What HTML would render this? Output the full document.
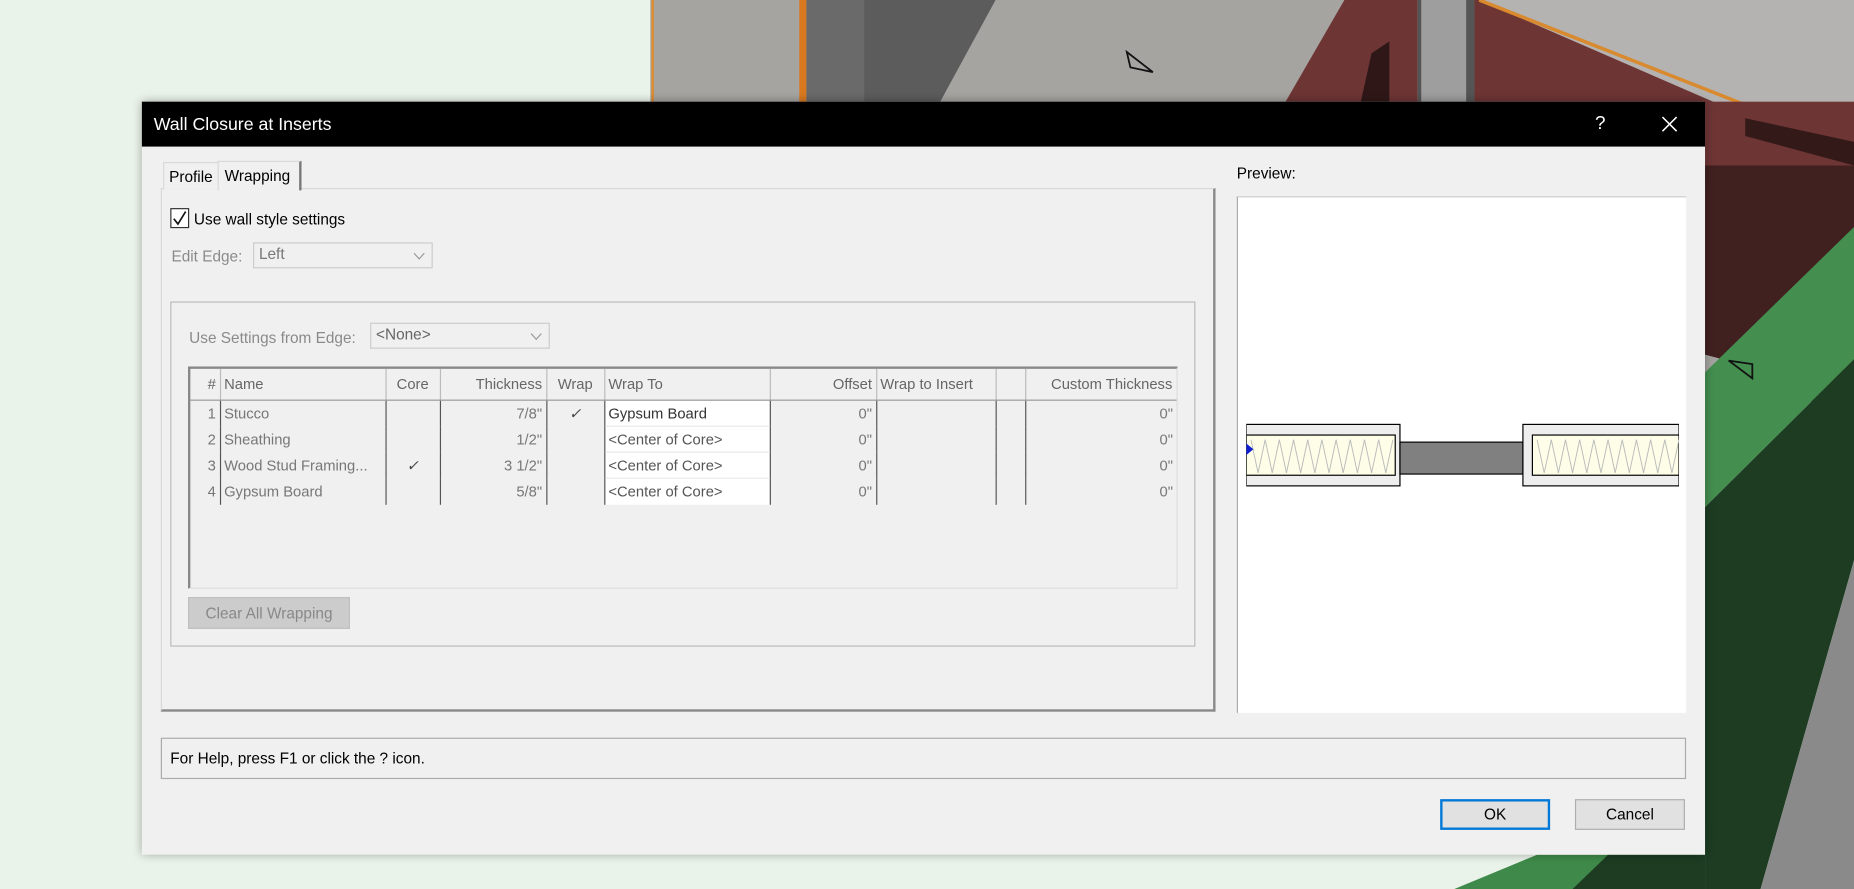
<!DOCTYPE html>
<html><head><meta charset="utf-8"><style>
html,body{margin:0;padding:0;width:1854px;height:889px;overflow:hidden;background:#eaf3ea;}
#w{position:absolute;left:0;top:0;width:1568px;height:752px;transform:scale(1.18240,1.18218);transform-origin:0 0;font-family:"Liberation Sans",sans-serif;font-size:13px;color:#000;}
.a{position:absolute;}
.dlg{left:120px;top:86px;width:1322px;height:637px;background:#f0f0f0;box-shadow:0 0 8px rgba(0,0,0,.35);}
.tb{left:0;top:0;width:1322px;height:38px;background:#000;color:#fff;}
.g{color:#8a8a8a;}
.combo{background:#f0f0f0;border:1px solid #ccc;height:20px;box-sizing:border-box;}
.combo span{position:absolute;left:4px;top:1px;color:#777;}
table{border-collapse:collapse;table-layout:fixed;width:834px;}
td{padding:0 3px;height:22px;box-sizing:border-box;color:#777;white-space:nowrap;overflow:hidden;font-size:12.5px;}
th{font-weight:normal;color:#666;height:26px;padding:0 3px;border-right:1px solid #bbb;border-bottom:1px solid #999;white-space:nowrap;overflow:hidden;font-size:12.5px;}
.r{text-align:right}
.b{border-right:1px solid #555}
</style></head><body><div id="w">
<svg class="a" style="left:0;top:0" width="1568" height="752">
<rect x="550" y="0" width="1018" height="752" fill="#eaf3ea"/>
<rect x="550" y="0" width="1018" height="90" fill="#a5a4a1"/>
<rect x="551" y="0" width="2" height="90" fill="#e08a2a"/>
<rect x="676" y="0" width="6" height="90" fill="#d9781f"/>
<rect x="682" y="0" width="50" height="90" fill="#6a6a6a"/>
<polygon points="731,0 842,0 793,90 731,90" fill="#5c5c5c"/>
<polygon points="1137,0 1199,0 1199,90 1085,90" fill="#6e3535"/>
<polygon points="1160,45 1175,35 1175,90 1150,90" fill="#2f1717"/>
<rect x="1199" y="0" width="48" height="90" fill="#9e9e9e"/>
<rect x="1199" y="0" width="3" height="90" fill="#555"/>
<rect x="1240" y="0" width="7" height="90" fill="#555"/>
<polygon points="1247,0 1568,0 1568,90 1247,90" fill="#6e3535"/>
<polygon points="1251,0 1568,0 1568,130 1458,90" fill="#b4b3b1"/>
<line x1="1251" y1="0" x2="1568" y2="125" stroke="#d98a2e" stroke-width="3"/>
<polygon points="953,44 956,57 975,61" fill="none" stroke="#111" stroke-width="1.5"/>
<rect x="1442" y="86" width="126" height="70" fill="#6e3535"/>
<polygon points="1476,100 1568,120 1568,140 1476,115" fill="#341919"/>
<rect x="1442" y="140" width="126" height="200" fill="#412020"/>
<polygon points="1442,300 1510,318 1470,345 1442,345" fill="#a5a4a1"/>
<polygon points="1442,345 1470,345 1442,370" fill="#6e3535"/>
<polygon points="1442,315 1568,192 1568,304 1442,429" fill="#448f50"/>
<polygon points="1442,429 1568,304 1568,474 1489,752 1442,752" fill="#1d3c22"/>
<polygon points="1568,474 1568,752 1489,752" fill="#8a8a8a"/>
<polygon points="1230,752 1300,723 1442,723 1442,752" fill="#3f8a4a"/>
<polygon points="1330,752 1360,723 1442,723 1442,752" fill="#1d3c22"/>
<polygon points="1462,305 1482,308 1482,320" fill="none" stroke="#111" stroke-width="1.5"/>
</svg>
<div class="a dlg">
 <div class="a tb"><span class="a" style="left:10px;top:11px;font-size:15px">Wall Closure at Inserts</span>
 <span class="a" style="left:1229px;top:10px;font-size:16px">?</span>
 <svg class="a" style="left:1285px;top:12px" width="14" height="14"><path d="M1 1L13 13M13 1L1 13" stroke="#fff" stroke-width="1.3"/></svg></div>
 <div class="a" style="left:16px;top:73px;width:889px;height:440px;border:1px solid #d8d8d8;border-right:2px solid #888;border-bottom:2px solid #888;background:#f0f0f0"></div>
 <div class="a" style="left:18px;top:51px;width:46px;height:22px;border:1px solid #d8d8d8;border-bottom:none;background:#f0f0f0"></div>
 <span class="a" style="left:23px;top:56px">Profile</span>
 <div class="a" style="left:64px;top:50px;width:68px;height:24px;border:1px solid #d8d8d8;border-right:2px solid #777;border-bottom:none;background:#f0f0f0"></div>
 <span class="a" style="left:70px;top:55px">Wrapping</span>
 <div class="a" style="left:24px;top:90px;width:14px;height:15px;border:1px solid #333;background:#fff"></div>
 <svg class="a" style="left:25px;top:91px" width="14" height="15"><path d="M2 8L5.5 12.5L12 2" fill="none" stroke="#111" stroke-width="1.4"/></svg>
 <span class="a" style="left:44px;top:92px">Use wall style settings</span>
 <span class="a g" style="left:25px;top:123px">Edit Edge:</span>
 <div class="a combo" style="left:94px;top:119px;width:152px;height:22px"><span>Left</span><svg class="a" style="right:6px;top:8px;position:absolute" width="9" height="6"><path d="M0 0L4.5 5L9 0" fill="none" stroke="#999"/></svg></div>
 <div class="a" style="left:24px;top:169px;width:865px;height:290px;border:1px solid #bbb;"></div>
 <span class="a g" style="left:40px;top:192px">Use Settings from Edge:</span>
 <div class="a combo" style="left:193px;top:187px;width:152px;height:22px"><span style="color:#666">&lt;None&gt;</span><svg class="a" style="right:6px;top:8px;position:absolute" width="9" height="6"><path d="M0 0L4.5 5L9 0" fill="none" stroke="#999"/></svg></div>
 <div class="a" style="left:39px;top:224px;width:834px;height:185px;border:1px solid #ddd;border-top:2px solid #888;border-left:2px solid #888;background:#f0f0f0;overflow:hidden">
 <table>
 <colgroup><col style="width:25px"><col style="width:140px"><col style="width:46px"><col style="width:90px"><col style="width:49px"><col style="width:140px"><col style="width:90px"><col style="width:101px"><col style="width:25px"><col style="width:128px"></colgroup>
 <tr><th class="r">#</th><th style="text-align:left">Name</th><th>Core</th><th class="r">Thickness</th><th>Wrap</th><th style="text-align:left">Wrap To</th><th class="r">Offset</th><th style="text-align:left">Wrap to Insert</th><th></th><th class="r">Custom Thickness</th></tr>
 <tr><td class="r b">1</td><td class="b">Stucco</td><td class="b"></td><td class="r b">7/8"</td><td class="b" style="text-align:center;color:#444;font-style:italic">✓</td><td style="background:#fff;color:#333">Gypsum Board</td><td class="r b" style="border-left:1px solid #555">0"</td><td class="b"></td><td class="b"></td><td class="r">0"</td></tr>
 <tr><td class="r b">2</td><td class="b">Sheathing</td><td class="b"></td><td class="r b">1/2"</td><td class="b"></td><td style="background:#fff;color:#555;border-top:1px solid #eee">&lt;Center of Core&gt;</td><td class="r b" style="border-left:1px solid #555">0"</td><td class="b"></td><td class="b"></td><td class="r">0"</td></tr>
 <tr><td class="r b">3</td><td class="b">Wood Stud Framing...</td><td class="b" style="text-align:center;color:#444;font-style:italic">✓</td><td class="r b">3 1/2"</td><td class="b"></td><td style="background:#fff;color:#555;border-top:1px solid #eee">&lt;Center of Core&gt;</td><td class="r b" style="border-left:1px solid #555">0"</td><td class="b"></td><td class="b"></td><td class="r">0"</td></tr>
 <tr><td class="r b">4</td><td class="b">Gypsum Board</td><td class="b"></td><td class="r b">5/8"</td><td class="b"></td><td style="background:#fff;color:#555;border-top:1px solid #eee">&lt;Center of Core&gt;</td><td class="r b" style="border-left:1px solid #555">0"</td><td class="b"></td><td class="b"></td><td class="r">0"</td></tr>
 </table></div>
 <div class="a" style="left:39px;top:419px;width:135px;height:25px;background:#ccc;border:1px solid #bfbfbf;color:#888;text-align:center;line-height:25px">Clear All Wrapping</div>
 <span class="a" style="left:926px;top:53px">Preview:</span>
 <div class="a" style="left:926px;top:80px;width:379px;height:436px;background:#fff;border-left:1px solid #aaa;border-top:1px solid #ccc"></div>
 <svg class="a" style="left:934px;top:270px" width="366" height="60">
  <rect x="0" y="3" width="130" height="52" fill="#eee" stroke="#000" stroke-width="1"/>
  <rect x="0" y="12" width="126" height="34" fill="#fdfde8" stroke="#000" stroke-width="1"/>
  <rect x="130" y="18" width="104" height="27" fill="#808080" stroke="#000"/>
  <rect x="234" y="3" width="132" height="52" fill="#eee" stroke="#000"/>
  <rect x="242" y="12" width="124" height="34" fill="#fdfde8" stroke="#000"/>
  <path d="M4 16L10 44L16 16L22 44L28 16L34 44L40 16L46 44L52 16L58 44L64 16L70 44L76 16L82 44L88 16L94 44L100 16L106 44L112 16L118 44L124 16" fill="none" stroke="#bbb" stroke-width=".8"/>
  <path d="M246 16L252 44L258 16L264 44L270 16L276 44L282 16L288 44L294 16L300 44L306 16L312 44L318 16L324 44L330 16L336 44L342 16L348 44L354 16L360 44L366 16" fill="none" stroke="#bbb" stroke-width=".8"/>
  <polygon points="0,19 6,24 0,29" fill="#1020d0"/>
 </svg>
 <div class="a" style="left:16px;top:538px;width:1288px;height:33px;border:1px solid #aaa;"></div>
 <span class="a" style="left:24px;top:548px">For Help, press F1 or click the ? icon.</span>
 <div class="a" style="left:1098px;top:590px;width:89px;height:22px;border:2px solid #0078d7;background:#e1e1e1;text-align:center;line-height:22px">OK</div>
 <div class="a" style="left:1212px;top:590px;width:91px;height:24px;border:1px solid #adadad;background:#e1e1e1;text-align:center;line-height:24px">Cancel</div>
</div>
</div></body></html>
